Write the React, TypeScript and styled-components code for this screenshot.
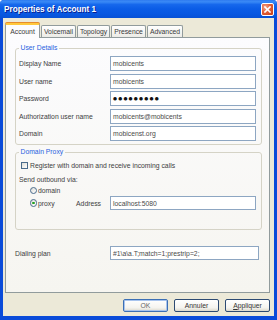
import React from "react";
import styled, { createGlobalStyle } from "styled-components";

const Global = createGlobalStyle`
  html, body { margin: 0; padding: 0; background: #ffffff; }
  body {
    width: 277px; height: 320px; overflow: hidden;
    font-family: "Liberation Sans", Arial, sans-serif;
  }
  * { box-sizing: border-box; }
`;

const Window = styled.div`
  width: 277px;
  height: 320px;
  display: flex;
  flex-direction: column;
  background: #0A4BD9;
  border-radius: 4px 4px 0 0;
  overflow: hidden;
`;

const TitleBar = styled.div`
  height: 18px;
  flex: none;
  display: flex;
  align-items: center;
  justify-content: space-between;
  padding: 0 3px 0 4px;
  background: linear-gradient(
    to bottom,
    #2E7BF0 0%,
    #3A8AF6 10%,
    #1668EC 25%,
    #0A5CE6 50%,
    #0858E2 75%,
    #0751D6 100%
  );
`;

const Title = styled.span`
  color: #ffffff;
  font-weight: bold;
  font-size: 8.2px;
  line-height: 10px;
  padding-top: 2px;
  text-shadow: 1px 1px 0 #0A1E8C;
`;

const CloseButton = styled.div`
  width: 13px;
  height: 13px;
  border: 1px solid #ffffff;
  border-radius: 2px;
  background: radial-gradient(circle at 30% 30%, #F2A48A 0%, #E2613A 45%, #C63C16 100%);
  display: flex;
  align-items: center;
  justify-content: center;
`;

const Body = styled.div`
  flex: 1;
  margin: 0 3px 4px 3px;
  background: #ECE9D8;
  padding: 5px 4px 4px 2px;
  display: flex;
  flex-direction: column;
`;

const TabRow = styled.div`
  height: 14px;
  display: flex;
  align-items: flex-end;
  gap: 1px;
`;

const Tab = styled.div<{ $w: number; $active?: boolean }>`
  width: ${(p) => p.$w}px;
  height: ${(p) => (p.$active ? 15 : 12)}px;
  margin-bottom: ${(p) => (p.$active ? -1 : 0)}px;
  position: relative;
  z-index: ${(p) => (p.$active ? 1 : 0)};
  border: 1px solid #919B9C;
  border-bottom: none;
  border-top: ${(p) => (p.$active ? "2px solid #FFC83C" : "1px solid #919B9C")};
  border-radius: 2px 2px 0 0;
  box-shadow: ${(p) => (p.$active ? "0 -1px 0 #E68B2C" : "none")};
  background: ${(p) => (p.$active ? "#FCFCFE" : "linear-gradient(#FFFFFF, #ECEBE6)")};
  font-size: 6.8px;
  color: #3a3a3a;
  display: flex;
  align-items: center;
  justify-content: center;
  padding-bottom: ${(p) => (p.$active ? 1 : 0)}px;
`;

const Panel = styled.div`
  height: 256px;
  border: 1px solid #919B9C;
  background: linear-gradient(#FCFCFE, #F6F5F0);
  padding: 5px 7px 0 9px;
  display: flex;
  flex-direction: column;
`;

const Group = styled.fieldset<{ $pt: number; $pb: number; $mt?: number }>`
  margin: ${(p) => p.$mt ?? 0}px 0 0 0;
  padding: ${(p) => p.$pt}px 5px ${(p) => p.$pb}px 3px;
  border: 1px solid #D5D3C6;
  border-radius: 3px;
  min-width: 0;
`;

const Legend = styled.legend`
  padding: 0 1.5px;
  font-size: 6.8px;
  line-height: 10px;
  color: #2A5FE0;
`;

const FormGrid = styled.div`
  display: grid;
  grid-template-columns: 91px 146px;
  grid-auto-rows: 15px;
  row-gap: 2.5px;
  align-items: center;
`;

const Label = styled.span`
  font-size: 6.8px;
  color: #404040;
  white-space: nowrap;
`;

const TextBox = styled.div<{ $h?: number }>`
  height: ${(p) => p.$h ?? 15}px;
  border: 1px solid #8DA6C2;
  background: #ffffff;
  padding: 0 2px;
  font-size: 6.8px;
  color: #4a4a4a;
  display: flex;
  align-items: center;
  white-space: nowrap;
  overflow: hidden;
`;

const Dots = styled.span`
  font-family: "DejaVu Sans", sans-serif;
  font-size: 4.6px;
  letter-spacing: 1.2px;
  color: #111;
`;

const CheckRow = styled.div`
  height: 9px;
  margin-left: 2px;
  display: flex;
  align-items: center;
  gap: 2px;
`;

const CheckBox = styled.span`
  width: 7px;
  height: 7px;
  border: 1px solid #4A6B8C;
  background: linear-gradient(135deg, #DCDCD7, #ffffff);
`;

const PlainRow = styled.div<{ $mt: number; $h: number }>`
  margin-top: ${(p) => p.$mt}px;
  height: ${(p) => p.$h}px;
  display: flex;
  align-items: center;
`;

const RadioRow = styled.div<{ $mt: number }>`
  margin-top: ${(p) => p.$mt}px;
  height: 9px;
  padding-left: 10.5px;
  display: flex;
  align-items: center;
  gap: 1px;
`;

const Radio = styled.span<{ $checked?: boolean }>`
  width: 7.5px;
  height: 7.5px;
  border-radius: 50%;
  border: 1px solid #4A6B8C;
  background: linear-gradient(135deg, #DCDCD7, #ffffff);
  display: inline-flex;
  align-items: center;
  justify-content: center;
  &::after {
    content: "";
    width: 2.5px;
    height: 2.5px;
    border-radius: 50%;
    background: ${(p) => (p.$checked ? "#21A121" : "transparent")};
  }
`;

const ProxyRow = styled.div`
  margin-top: 1px;
  height: 14px;
  display: grid;
  grid-template-columns: 91px 146px;
  align-items: center;
`;

const ProxyLeft = styled.div`
  display: flex;
  align-items: center;
  gap: 1px;
  padding-left: 10.5px;
  padding-right: 9px;
`;

const AddressLabel = styled(Label)`
  margin-left: auto;
`;

const DialRow = styled.div`
  margin-top: 16px;
  display: grid;
  grid-template-columns: 95px 149px;
  align-items: center;
`;

const ButtonRow = styled.div`
  margin-top: 6px;
  display: flex;
  justify-content: flex-end;
  gap: 6px;
`;

const Button = styled.div<{ $default?: boolean }>`
  width: 45px;
  height: 13px;
  border: 1px solid ${(p) => (p.$default ? "#3C6FB4" : "#2D4A72")};
  border-radius: 2px;
  background: linear-gradient(#FFFFFF 0%, #F5F4EF 70%, #DCD8CC 100%);
  box-shadow: ${(p) => (p.$default ? "inset 0 0 0 1px #A8C4EE" : "none")};
  font-size: 6.8px;
  color: ${(p) => (p.$default ? "#666" : "#333")};
  display: flex;
  align-items: center;
  justify-content: center;
`;

const tabs = [
  { name: "Account", w: 35, active: true },
  { name: "Voicemail", w: 35 },
  { name: "Topology", w: 33 },
  { name: "Presence", w: 35 },
  { name: "Advanced", w: 36 },
];

const userRows: { label: string; value?: string; password?: boolean }[] = [
  { label: "Display Name", value: "mobicents" },
  { label: "User name", value: "mobicents" },
  { label: "Password", password: true },
  { label: "Authorization user name", value: "mobicents@mobicents" },
  { label: "Domain", value: "mobicenst.org" },
];

export default function App() {
  return (
    <>
      <Global />
      <Window>
        <TitleBar>
          <Title>Properties of Account 1</Title>
          <CloseButton>
            <svg width="7" height="7" viewBox="0 0 7 7">
              <path d="M1 1 L6 6 M6 1 L1 6" stroke="#ffffff" strokeWidth="1.6" strokeLinecap="square" />
            </svg>
          </CloseButton>
        </TitleBar>
        <Body>
          <TabRow>
            {tabs.map((t) => (
              <Tab key={t.name} $w={t.w} $active={t.active}>
                {t.name}
              </Tab>
            ))}
          </TabRow>
          <Panel>
            <Group $pt={3} $pb={3}>
              <Legend>User Details</Legend>
              <FormGrid>
                {userRows.map((r) => (
                  <React.Fragment key={r.label}>
                    <Label>{r.label}</Label>
                    <TextBox>
                      {r.password ? <Dots>●●●●●●●●●</Dots> : r.value}
                    </TextBox>
                  </React.Fragment>
                ))}
              </FormGrid>
            </Group>
            <Group $pt={4} $pb={19} $mt={2}>
              <Legend>Domain Proxy</Legend>
              <CheckRow>
                <CheckBox />
                <Label>Register with domain and receive incoming calls</Label>
              </CheckRow>
              <PlainRow $mt={4} $h={10}>
                <Label>Send outbound via:</Label>
              </PlainRow>
              <RadioRow $mt={2}>
                <Radio />
                <Label>domain</Label>
              </RadioRow>
              <ProxyRow>
                <ProxyLeft>
                  <Radio $checked />
                  <Label>proxy</Label>
                  <AddressLabel>Address</AddressLabel>
                </ProxyLeft>
                <TextBox $h={14}>localhost:5080</TextBox>
              </ProxyRow>
            </Group>
            <DialRow>
              <Label>Dialing plan</Label>
              <TextBox $h={14}>#1\a\a.T;match=1;prestrip=2;</TextBox>
            </DialRow>
          </Panel>
          <ButtonRow>
            <Button $default>OK</Button>
            <Button>Annuler</Button>
            <Button>
              <span>
                <u>A</u>ppliquer
              </span>
            </Button>
          </ButtonRow>
        </Body>
      </Window>
    </>
  );
}
